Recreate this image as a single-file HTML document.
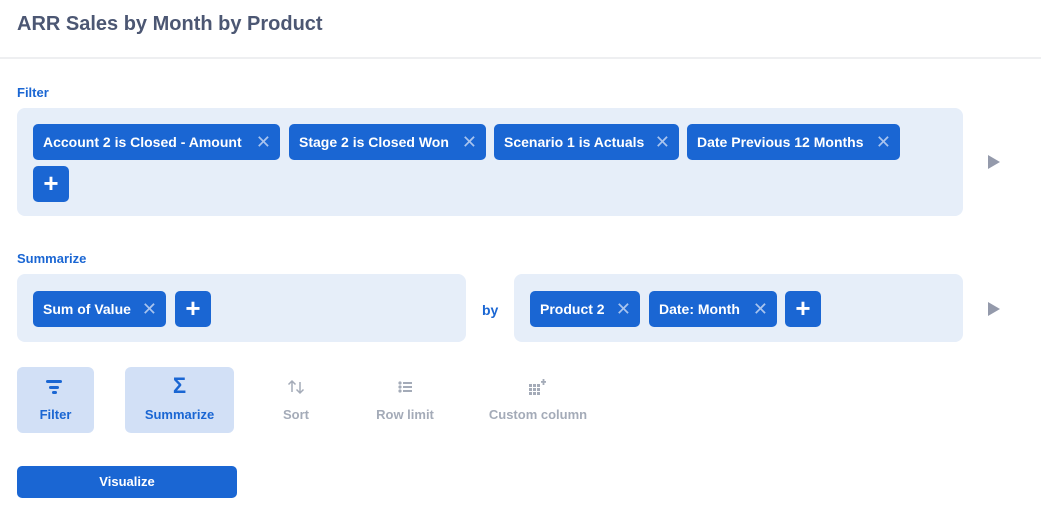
<!DOCTYPE html><html><head><style>
body{margin:0;width:1041px;height:513px;background:#fff;font-family:"Liberation Sans",sans-serif;position:relative;overflow:hidden}
.a{position:absolute}
.t{left:17px;top:13px;font-size:20px;font-weight:bold;color:#4c5773}
.hr{left:0;top:57px;width:1041px;height:2px;background:#eeeff1}
.lbl{font-size:13px;font-weight:bold;color:#1a66d3}
.box{background:#e6eef9;border-radius:8px}
.p{height:36px;background:#1a66d3;border-radius:5px;color:#fff;font-size:14px;font-weight:bold;line-height:36px;padding-left:10px;box-sizing:border-box}
.p .x{position:absolute;right:9px;top:0;color:#a9c4ee;font-weight:normal;font-size:18px}
.pl{width:36px;height:36px;background:#1a66d3;border-radius:5px;color:#fff;font-size:26px;font-weight:bold;text-align:center;line-height:35px}
.arr{width:0;height:0;border-left:12px solid #949aab;border-top:7px solid transparent;border-bottom:7px solid transparent}
.b{top:367px;height:66px;border-radius:6px;text-align:center;font-size:13px;font-weight:bold}
.b .l{position:absolute;left:0;right:0;top:40px}
</style></head><body>
<div class="a t">ARR Sales by Month by Product</div>
<div class="a hr"></div>
<div class="a lbl" style="left:17px;top:85px">Filter</div>
<div class="a box" style="left:17px;top:108px;width:946px;height:108px"></div>
<div class="a p" style="left:33px;top:124px;width:247px">Account 2 is Closed - Amount<span class="x">✕</span></div>
<div class="a p" style="left:289px;top:124px;width:197px">Stage 2 is Closed Won<span class="x">✕</span></div>
<div class="a p" style="left:494px;top:124px;width:185px">Scenario 1 is Actuals<span class="x">✕</span></div>
<div class="a p" style="left:687px;top:124px;width:213px">Date Previous 12 Months<span class="x">✕</span></div>
<div class="a pl" style="left:33px;top:166px">+</div>
<div class="a arr" style="left:988px;top:155px"></div>
<div class="a lbl" style="left:17px;top:251px">Summarize</div>
<div class="a box" style="left:17px;top:274px;width:449px;height:68px"></div>
<div class="a p" style="left:33px;top:291px;width:133px">Sum of Value<span class="x">✕</span></div>
<div class="a pl" style="left:175px;top:291px">+</div>
<div class="a lbl" style="left:482px;top:302px;font-size:14px">by</div>
<div class="a box" style="left:514px;top:274px;width:449px;height:68px"></div>
<div class="a p" style="left:530px;top:291px;width:110px">Product 2<span class="x">✕</span></div>
<div class="a p" style="left:649px;top:291px;width:128px">Date: Month<span class="x">✕</span></div>
<div class="a pl" style="left:785px;top:291px">+</div>
<div class="a arr" style="left:988px;top:302px"></div>
<div class="a b" style="left:17px;width:77px;background:#d2e0f6;color:#1a66d3">
<svg class="a" style="left:28px;top:12px" width="18" height="16"><rect x="1" y="1" width="16" height="3" rx="1.5" fill="#1a66d3"/><rect x="4" y="7" width="10" height="3" rx="1.5" fill="#1a66d3"/><rect x="7" y="12" width="5" height="3" rx="1.5" fill="#1a66d3"/></svg>
<div class="l">Filter</div></div>
<div class="a b" style="left:125px;width:109px;background:#d2e0f6;color:#1a66d3">
<div class="a" style="left:0;right:0;top:6px;font-size:22px">Σ</div>
<div class="l">Summarize</div></div>
<div class="a b" style="left:256px;width:80px;color:#a4abb8">
<svg class="a" style="left:31px;top:12px" width="18" height="16" fill="none" stroke="#a4abb8" stroke-width="1.5"><path d="M5 13V2M1.5 5.5 5 2l3.5 3.5M13 3v11M9.5 10.5 13 14l3.5-3.5"/></svg>
<div class="l">Sort</div></div>
<div class="a b" style="left:360px;width:90px;color:#a4abb8">
<svg class="a" style="left:38px;top:14px" width="14" height="12"><g fill="#a4abb8"><circle cx="2" cy="2" r="1.6"/><circle cx="2" cy="6" r="1.6"/><circle cx="2" cy="10" r="1.6"/><rect x="5" y="1" width="9" height="2"/><rect x="5" y="5" width="9" height="2"/><rect x="5" y="9" width="9" height="2"/></g></svg>
<div class="l">Row limit</div></div>
<div class="a b" style="left:478px;width:120px;color:#a4abb8">
<svg class="a" style="left:50px;top:12px" width="18" height="16"><g fill="#a4abb8"><rect x="1" y="5" width="3" height="3"/><rect x="5" y="5" width="3" height="3"/><rect x="9" y="5" width="3" height="3"/><rect x="1" y="9" width="3" height="3"/><rect x="5" y="9" width="3" height="3"/><rect x="9" y="9" width="3" height="3"/><rect x="1" y="13" width="3" height="3"/><rect x="5" y="13" width="3" height="3"/><rect x="9" y="13" width="3" height="3"/><rect x="13" y="2" width="5" height="1.8"/><rect x="14.6" y="0" width="1.8" height="6"/></g></svg>
<div class="l">Custom column</div></div>
<div class="a" style="left:17px;top:466px;width:220px;height:32px;background:#1a66d3;border-radius:5px;color:#fff;font-size:13px;font-weight:bold;text-align:center;line-height:32px">Visualize</div>
</body></html>
